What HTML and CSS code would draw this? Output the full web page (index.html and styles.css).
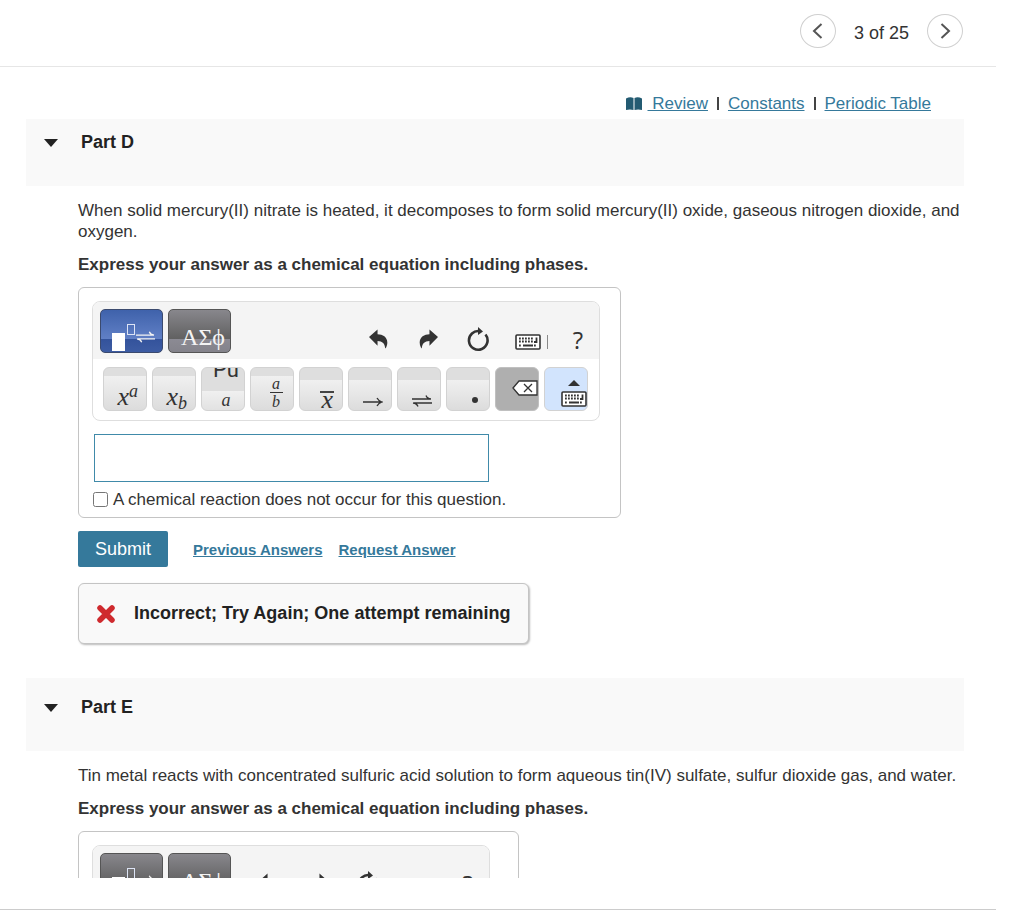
FILE: index.html
```
<!DOCTYPE html>
<html lang="en">
<head>
  <meta charset="UTF-8" />
  <title>Chemical Equations - 3 of 25</title>
  <meta name="viewport" content="width=device-width, initial-scale=1" />
  <link rel="stylesheet" href="styles.css">
</head>
<body>
  <svg class="sprite" aria-hidden="true">
    <symbol id="undo" viewBox="0 0 20 20">
      <path d="M9 0v5c7 0 13 5 9 14l-1 1c0-5-3-8-8-8v5L0 8z" />
    </symbol>
    <symbol id="redo" viewBox="0 0 20 20">
      <path d="M11 0v5C4 5-2 10 2 19l1 1c0-5 3-8 8-8v5l9-9z" />
    </symbol>
    <symbol id="reset" viewBox="0 0 24 24">
      <path d="M14 4.200A9.300 9.300 0 1 0 19.500 7.500" fill="none" stroke="currentColor" stroke-width="2.600" />
      <path d="M12 0l5 4.500-5 3.500z" />
    </symbol>
    <symbol id="keyboard" viewBox="0 0 26 16">
      <rect x="1" y="1" width="24" height="14" rx="1" fill="#fff" stroke="currentColor" stroke-width="1.600" />
      <path d="M4 4.500h15M4 7.500h15M4 11.500h3M19 11.500h3" fill="none" stroke="currentColor" stroke-width="1.800" stroke-dasharray="1.800 1.200" />
      <path d="M8 11.500h10M21.500 3.500V8H19" fill="none" stroke="currentColor" stroke-width="1.800" />
    </symbol>
    <symbol id="equilibrium" viewBox="0 0 20 12">
      <path d="M0 4h18M14 0.500q1 3 5 3.500M20 8H2M6 11.500Q5 8.500 1 8" fill="none" stroke="currentColor" stroke-width="1.300" />
    </symbol>
  </svg>

  <div class="viewer">
    <header class="pager">
      <button class="round" aria-label="Previous item">
        <svg width="12" height="18" viewBox="0 0 12 18"><path d="M9.500 2L2 9l7.500 7" /></svg>
      </button>
      <span>3 of 25</span>
      <button class="round" aria-label="Next item">
        <svg width="12" height="18" viewBox="0 0 12 18"><path d="M2.500 2L10 9l-7.500 7" /></svg>
      </button>
    </header>

    <nav class="resources">
      <svg class="book" width="16" height="14" viewBox="0 0 16 14">
        <path d="M0 1.500Q4-.5 7.500 1v12Q4 12 0 13zM8.500 1Q12-.5 16 1.500V13q-4-1-7.500 0z" />
      </svg>
      <a href="#">&nbsp;Review</a>
      <span class="bar"></span>
      <a href="#">Constants</a>
      <span class="bar"></span>
      <a href="#">Periodic Table</a>
    </nav>

    <section>
      <div class="part-head first">
        <button class="toggle" aria-label="Collapse Part D"></button>
        <h2>Part D</h2>
      </div>
      <div class="part-body">
        <p>When solid mercury(II) nitrate is heated, it decomposes to form solid mercury(II) oxide, gaseous nitrogen dioxide, and oxygen.</p>
        <p class="instructions">Express your answer as a chemical equation including phases.</p>

        <div class="answer">
          <div class="toolbar">
            <div class="tools">
              <button class="group active" aria-label="Templates">
                <span class="template"><i class="solid"></i><i class="hollow"></i><svg width="19" height="12"><use href="#equilibrium" /></svg></span>
              </button>
              <button class="group">ΑΣϕ</button>
              <div class="actions">
                <button aria-label="Undo"><svg width="19" height="20"><use href="#undo" /></svg></button>
                <button aria-label="Redo"><svg width="19" height="20"><use href="#redo" /></svg></button>
                <button aria-label="Reset"><svg width="24" height="24"><use href="#reset" /></svg></button>
                <button class="keys" aria-label="Keyboard shortcuts"><svg width="26" height="16"><use href="#keyboard" /></svg></button>
                <button class="help" aria-label="Help">?</button>
              </div>
            </div>
            <div class="symbols">
              <button class="key script"><span>x<sup>a</sup></span></button>
              <button class="key script"><span>x<sub>b</sub></span></button>
              <button class="key element"><b>Pu</b><i>a</i></button>
              <button class="key fraction"><span>a</span><span>b</span></button>
              <button class="key tall script"><span class="mean">x</span></button>
              <button class="key tall" aria-label="Reaction arrow">
                <svg width="20" height="10" viewBox="0 0 20 10"><path d="M0 5h18M14 1q1.500 3 5 4-3.500 1-5 4" fill="none" stroke="currentColor" stroke-width="1.300" /></svg>
              </button>
              <button class="key tall" aria-label="Equilibrium arrow"><svg width="20" height="12"><use href="#equilibrium" /></svg></button>
              <button class="key tall" aria-label="Dot"><span class="dot"></span></button>
              <button class="key erase" aria-label="Delete">
                <svg width="26" height="16" viewBox="0 0 26 16"><path d="M1 8l6-7h18v14H7z" fill="#fff" stroke="currentColor" stroke-width="1.300" /><path d="M12 4l8 8M20 4l-8 8" stroke="currentColor" stroke-width="1.300" /></svg>
              </button>
              <button class="key show-keys" aria-label="Show keyboard">
                <svg width="12" height="6" viewBox="0 0 12 6"><path d="M6 0l6 6H0z" /></svg>
                <svg width="26" height="16"><use href="#keyboard" /></svg>
              </button>
            </div>
          </div>
          <input class="equation" type="text" aria-label="Chemical equation">
          <label class="none"><input type="checkbox"> A chemical reaction does not occur for this question.</label>
        </div>

        <div class="submit-row">
          <button class="submit">Submit</button>
          <a href="#">Previous Answers</a>
          <a href="#">Request Answer</a>
        </div>

        <div class="feedback">
          <svg width="18" height="18" viewBox="0 0 18 18"><path d="M3 3l12 12M15 3L3 15" stroke="#cf2a2e" stroke-width="5.500" stroke-linecap="round" /></svg>
          <span>Incorrect; Try Again; One attempt remaining</span>
        </div>
      </div>
    </section>

    <section>
      <div class="part-head">
        <button class="toggle" aria-label="Collapse Part E"></button>
        <h2>Part E</h2>
      </div>
      <div class="part-body">
        <p>Tin metal reacts with concentrated sulfuric acid solution to form aqueous tin(IV) sulfate, sulfur dioxide gas, and water.</p>
        <p class="instructions">Express your answer as a chemical equation including phases.</p>

        <div class="answer narrow">
          <div class="toolbar">
            <div class="tools">
              <button class="group" aria-label="Templates">
                <span class="template"><i class="solid"></i><i class="hollow"></i><svg width="19" height="12"><use href="#equilibrium" /></svg></span>
              </button>
              <button class="group">ΑΣϕ</button>
              <div class="actions">
                <button aria-label="Undo"><svg width="19" height="20"><use href="#undo" /></svg></button>
                <button aria-label="Redo"><svg width="19" height="20"><use href="#redo" /></svg></button>
                <button aria-label="Reset"><svg width="24" height="24"><use href="#reset" /></svg></button>
                <button class="keys" aria-label="Keyboard shortcuts"><svg width="26" height="16"><use href="#keyboard" /></svg></button>
                <button class="help" aria-label="Help">?</button>
              </div>
            </div>
          </div>
        </div>
      </div>
    </section>
  </div>
  <footer></footer>
</body>
</html>
```
FILE: styles.css
```
* {
  box-sizing: border-box;
}

body {
  display: flex;
  flex-direction: column;
  height: 100vh;
  margin: 0;
  overflow: hidden;
  background: #fff;
  color: #333;
  font-family: "Liberation Sans", Arial, sans-serif;
  font-size: 17px;
  line-height: 21px;
}

button {
  padding: 0;
  border: 0;
  background: none;
  color: inherit;
  font: inherit;
}

svg {
  display: block;
  flex: none;
  fill: currentColor;
}

a {
  color: #35799b;
}

.sprite {
  position: absolute;
  width: 0;
  height: 0;
}

.viewer {
  flex: 1;
  min-height: 0;
  overflow: hidden;
}

footer {
  flex: none;
  height: 32px;
  margin-right: 28px;
  border-bottom: 1px solid #ccc;
}

/* item navigation */
.pager {
  display: flex;
  justify-content: flex-end;
  align-items: center;
  gap: 18px;
  height: 67px;
  margin-right: 28px;
  padding: 0 33px 4px 0;
  border-bottom: 1px solid #e6e6e6;
  font-size: 18px;
}

.pager span {
  padding-top: 4px;
}

.round {
  display: flex;
  align-items: center;
  justify-content: center;
  width: 36px;
  height: 34px;
  border: 1px solid #d0d0d0;
  border-radius: 50%;
}

.round svg {
  fill: none;
  stroke: #555;
  stroke-width: 2;
}

.resources {
  display: flex;
  justify-content: flex-end;
  align-items: center;
  height: 52px;
  padding: 21px 93px 0 0;
}

.book {
  margin-right: 6px;
  color: #235b72;
}

.bar {
  width: 2px;
  height: 13px;
  margin: 0 9px;
  background: #444;
}

/* question parts */
.part-head {
  display: flex;
  align-items: flex-start;
  height: 73px;
  margin: 0 60px 0 26px;
  padding: 18px 18px 0;
  background: #f9f9f9;
}

.part-head.first {
  height: 67px;
  padding-top: 12px;
}

.part-head h2 {
  margin: 0 0 0 23px;
  color: #222;
  font-size: 18px;
  line-height: 22px;
}

.toggle {
  width: 14px;
  height: 8px;
  margin-top: 8px;
  background: #222;
  clip-path: polygon(0 0, 100% 0, 50% 100%);
}

.part-body {
  padding: 14px 60px 34px 78px;
}

.part-body p {
  margin: 0 0 12px;
}

.part-body .instructions {
  font-weight: bold;
}

/* equation editor */
.answer {
  max-width: 543px;
  padding: 13px 20px 7px 13px;
  border: 1px solid #c4c4c4;
  border-radius: 6px;
}

.answer.narrow {
  max-width: 441px;
  padding-right: 28px;
}

.toolbar {
  max-width: 508px;
  border: 1px solid #dedede;
  border-radius: 8px;
  overflow: hidden;
}

.tools {
  display: flex;
  gap: 5px;
  height: 57px;
  padding: 7px 0 0 7px;
  background: #f4f4f4;
}

.group {
  display: flex;
  align-items: flex-end;
  justify-content: flex-end;
  width: 63px;
  height: 44px;
  padding: 0 5px 3px 0;
  overflow: hidden;
  border: 1px solid #555;
  border-radius: 5px;
  background: linear-gradient(#88878c, #606060 70%, #8b8a93 70%, #84838b);
  color: #f4f4f4;
  font: 24px/24px "Liberation Serif", "Times New Roman", serif;
}

.group.active {
  border-color: #3b4a6e;
  background: linear-gradient(#3f62ab, #6180c6 70%, #34539c 70%, #3d5ca3);
}

.template {
  display: flex;
  align-items: flex-end;
  margin-right: 2px;
}

.template .solid {
  width: 13px;
  height: 18px;
  margin-bottom: -2px;
  background: #fff;
}

.template .hollow {
  width: 8px;
  height: 11px;
  margin: 0 1px 14px 2px;
  border: 1px solid #dde4f5;
}

.template svg {
  margin-bottom: 6px;
}

.actions {
  display: flex;
  gap: 10px;
  margin-left: auto;
  padding-right: 1px;
}

.actions button {
  display: flex;
  align-items: center;
  justify-content: center;
  width: 40px;
  height: 44px;
  padding-top: 16px;
}

.actions .keys {
  position: relative;
  padding-top: 22px;
}

.keys::after {
  content: "";
  position: absolute;
  right: 0;
  bottom: 4px;
  width: 1px;
  height: 14px;
  background: #888;
}

.actions .help {
  font: 24px "Open Sans", sans-serif;
}

.symbols {
  display: flex;
  gap: 5px;
  padding: 8px 10px 9px;
}

.key {
  display: flex;
  align-items: flex-end;
  justify-content: flex-end;
  width: 44px;
  height: 44px;
  overflow: hidden;
  padding: 0 8px 2px 0;
  border: 1px solid #d2d2d2;
  border-radius: 6px;
  background: linear-gradient(#dedede 8px, #f0f0f0 8px, #dcdcdc);
  font-family: "Liberation Serif", "Times New Roman", serif;
  font-style: italic;
}

.script {
  font-size: 26px;
  line-height: 22px;
}

.script sup,
.script sub {
  font-size: 18px;
  line-height: 10px;
}

.script sup {
  vertical-align: 8px;
}

.script sub {
  vertical-align: -4px;
}

.mean {
  padding: 0 1px;
  border-top: 2px solid #444;
  line-height: 14px;
}

.key.element {
  flex-direction: column;
  align-items: center;
  justify-content: space-between;
  padding: 0 0 1px 6px;
  background: linear-gradient(#dedede 23px, #f0f0f0 23px, #e2e2e2);
}

.element b {
  margin-top: -9px;
  font: 22px/22px Roboto, sans-serif;
}

.element i {
  font-size: 18px;
  line-height: 18px;
}

.key.fraction {
  flex-direction: column;
  align-items: center;
  padding: 0 0 0 8px;
  font-size: 16px;
  line-height: 17px;
}

.fraction span {
  width: 13px;
}

.fraction span:first-child {
  border-bottom: 1px solid #333;
}

.key.tall {
  padding: 0 8px 3px 0;
  background: linear-gradient(#dedede 12px, #f0f0f0 12px, #dcdcdc);
}

.dot {
  width: 6px;
  height: 6px;
  margin: 0 3px 4px 0;
  border-radius: 50%;
  background: #333;
}

.key.erase {
  padding: 0 0 14px;
  border-color: #c0c0c0;
  background: #afafaf;
}

.key.show-keys {
  flex-direction: column;
  align-items: flex-end;
  justify-content: flex-end;
  gap: 5px;
  padding: 0 0 3px;
  background: #d2e4fd;
}

.show-keys svg:first-child {
  margin-right: 7px;
}

.equation {
  display: block;
  width: 100%;
  max-width: 395px;
  height: 48px;
  margin: 13px 0 7px 2px;
  border: 1px solid #408aa9;
  background: #fff;
  font-size: 18px;
}

.none {
  display: flex;
  align-items: center;
  gap: 5px;
}

.none input {
  width: 15px;
  height: 15px;
  margin: 0 0 0 1px;
}

/* submit and feedback */
.submit-row {
  display: flex;
  align-items: center;
  gap: 16px;
  margin-top: 13px;
  font-size: 15px;
  font-weight: bold;
}

.submit {
  width: 90px;
  height: 36px;
  margin-right: 9px;
  border-radius: 2px;
  background: #35799b;
  color: #fff;
  font-size: 18px;
  font-weight: normal;
}

.feedback {
  display: flex;
  align-items: center;
  gap: 19px;
  width: fit-content;
  height: 61px;
  margin-top: 16px;
  padding: 0 18px;
  border: 1px solid #c4c4c4;
  border-radius: 6px;
  background: #f9f9f9;
  box-shadow: 1px 1px 2px #bbb;
  color: #222;
  font-size: 18px;
  font-weight: bold;
}
```
